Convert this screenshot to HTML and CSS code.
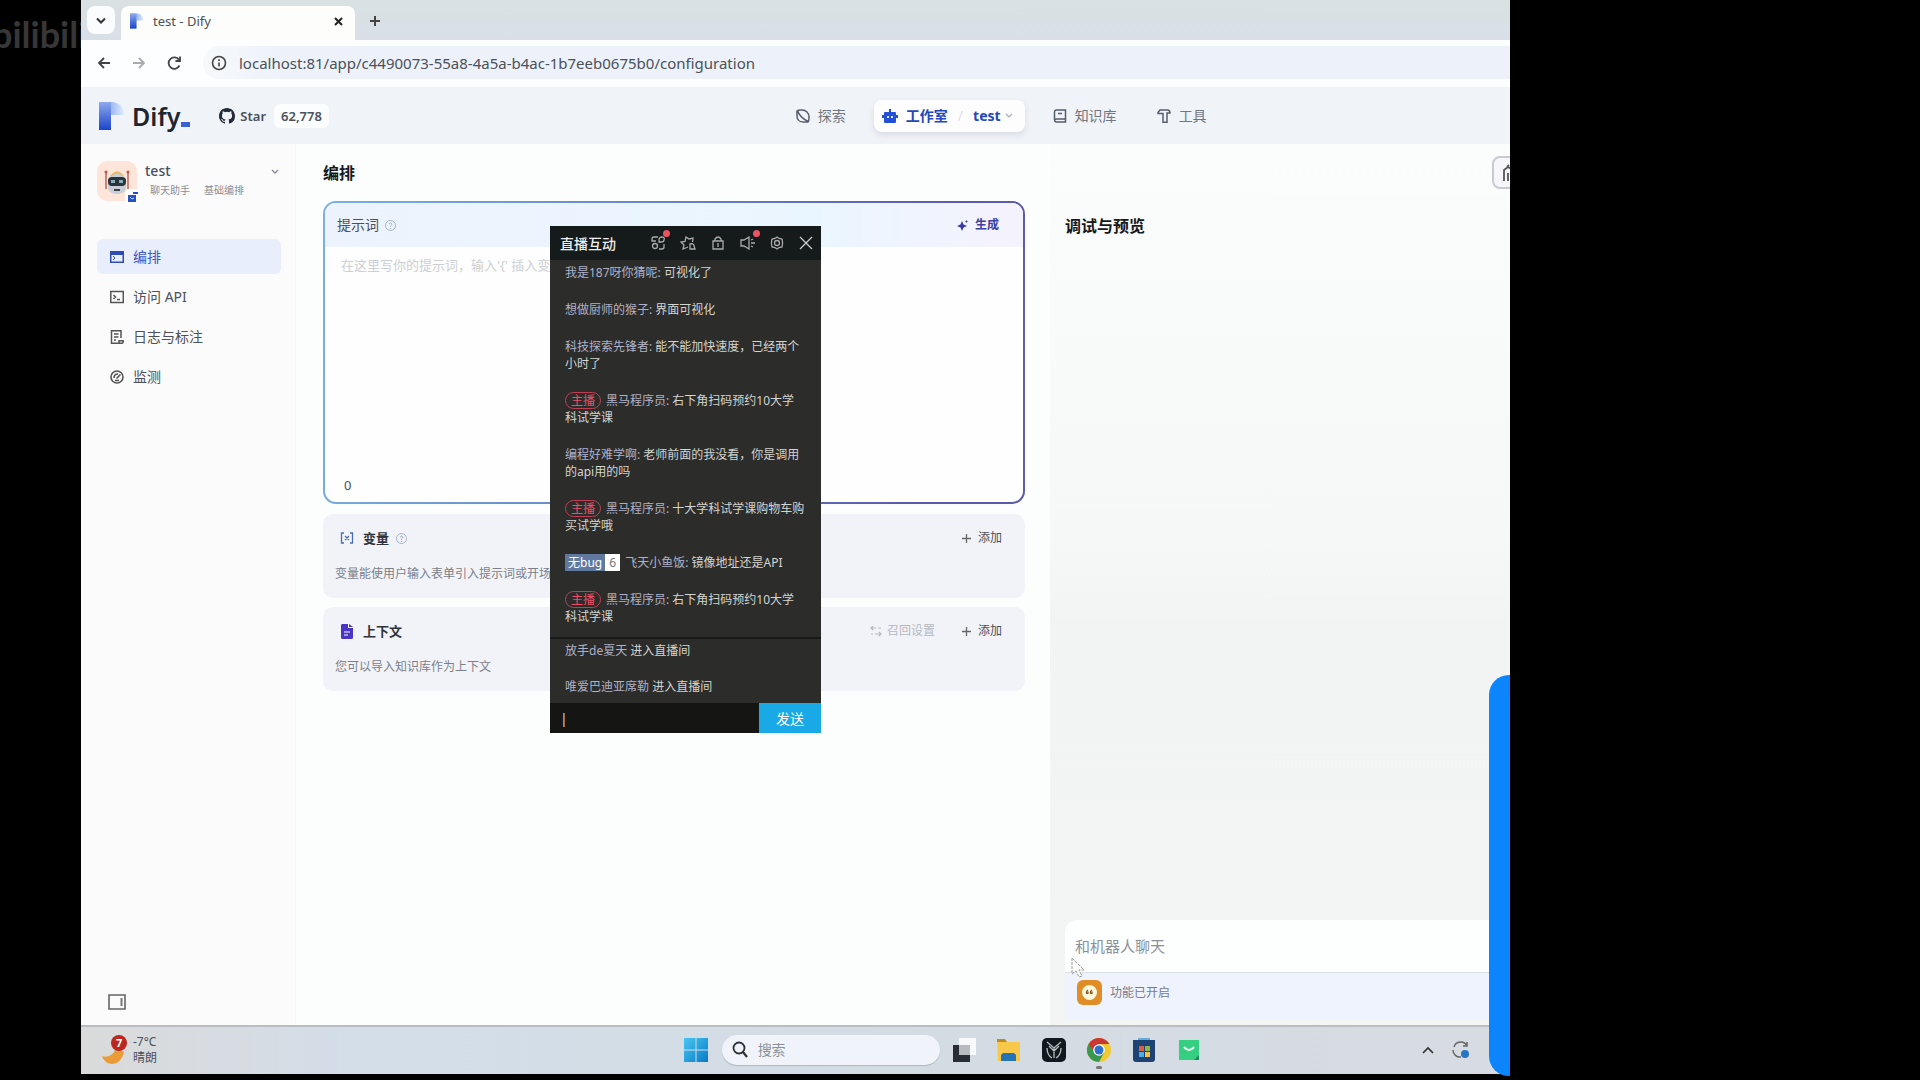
FILE: index.html
```html
<!DOCTYPE html>
<html lang="zh-CN">
<head>
<meta charset="utf-8">
<title>test - Dify</title>
<link rel="stylesheet" href="styles.css">
</head>
<body>
<div class="stage">
<span class="watermark">bilibili</span>
<div class="screen">

  <div class="tabstrip">
    <button class="tab-list" aria-label="搜索标签页"><svg width="10" height="7" viewBox="0 0 10 7"><path d="M1 1.500 5 5.500 9 1.500" fill="none" stroke="#333" stroke-width="2"/></svg></button>
    <div class="tab">
      <svg width="14" height="16" viewBox="0 0 26 28"><use href="#dify-mark"/></svg>
      <span class="tab-title">test - Dify</span>
      <button class="plain" aria-label="关闭标签页"><svg width="9" height="9" viewBox="0 0 9 9"><path d="M1 1 8 8M8 1 1 8" stroke="#222" stroke-width="2"/></svg></button>
    </div>
    <button class="plain new-tab" aria-label="新标签页"><svg width="12" height="12" viewBox="0 0 12 12"><path d="M6 1v10M1 6h10" stroke="#444" stroke-width="2"/></svg></button>
  </div>

  <div class="toolbar">
    <button class="plain" aria-label="后退"><svg width="14" height="12" viewBox="0 0 14 12"><path d="M13 6H2M7 1 2 6l5 5" fill="none" stroke="#444" stroke-width="1.800"/></svg></button>
    <button class="plain" aria-label="前进"><svg width="14" height="12" viewBox="0 0 14 12"><path d="M1 6h11M7 1l5 5-5 5" fill="none" stroke="#aaa" stroke-width="1.800"/></svg></button>
    <button class="plain" aria-label="重新加载"><svg width="15" height="14" viewBox="0 0 15 14"><path d="M12.500 9.500A5.700 5.700 0 1 1 12 3.800M13 .5v4.500H8.500" fill="none" stroke="#444" stroke-width="1.800"/></svg></button>
    <div class="address">
      <svg width="16" height="16" viewBox="0 0 16 16"><circle cx="8" cy="8" r="6.500" fill="none" stroke="#444" stroke-width="1.600"/><path d="M8 7.500v4M8 4.300v1.700" stroke="#444" stroke-width="1.600"/></svg>
      <input class="url" aria-label="网址" value="localhost:81/app/c4490073-55a8-4a5a-b4ac-1b7eeb0675b0/configuration">
    </div>
  </div>

  <header class="app-header">
    <a class="brand" href="#">
      <svg width="26" height="28" viewBox="0 0 26 28">
        <defs>
          <linearGradient id="g1" x1="0" y1="0" x2="0" y2="1"><stop offset="0" stop-color="#8fa8ee"/><stop offset="1" stop-color="#1a45c8"/></linearGradient>
          <linearGradient id="g2" x1="0" y1="0" x2="1" y2="0"><stop offset="0.300" stop-color="#86a8ee"/><stop offset="1" stop-color="#e0ecfb"/></linearGradient>
          <g id="dify-mark"><path d="M0 0h12C20 0 25 5 25 13H12V28H0z" fill="url(#g2)"/><path d="M0 0h12v28H0z" fill="url(#g1)"/></g>
        </defs>
        <use href="#dify-mark"/>
      </svg>
      <span class="brand-name">Dify</span><i class="brand-dash"></i>
    </a>
    <a class="github" href="#">
      <svg width="16" height="16" viewBox="0 0 16 16"><path fill="#222b38" d="M8 0C3.580 0 0 3.580 0 8c0 3.540 2.290 6.530 5.470 7.590.4.070.55-.17.55-.38 0-.19-.01-.82-.01-1.490-2.010.37-2.530-.49-2.690-.94-.09-.23-.48-.94-.82-1.130-.28-.15-.68-.52-.01-.53.63-.01 1.080.58 1.230.82.72 1.210 1.870.87 2.330.66.07-.52.28-.87.51-1.070-1.780-.2-3.640-.89-3.640-3.950 0-.87.31-1.590.82-2.150-.08-.2-.36-1.020.08-2.120 0 0 .67-.21 2.200.82a7.600 7.600 0 0 1 4 0c1.530-1.040 2.200-.82 2.200-.82.44 1.100.16 1.920.08 2.120.51.56.82 1.270.82 2.150 0 3.070-1.870 3.750-3.650 3.950.29.25.54.73.54 1.480 0 1.070-.01 1.930-.01 2.200 0 .21.15.46.55.38A8 8 0 0 0 16 8c0-4.420-3.580-8-8-8z"/></svg>
      <span>Star</span><span class="stars">62,778</span>
    </a>
    <nav class="topnav">
      <a class="explore" href="#"><svg width="14" height="14" viewBox="0 0 14 14" fill="none" stroke="#555d6b" stroke-width="1.500"><path d="M1 2C2 .8 4 1 6 1c4 0 7 3 7 7 0 2 .2 4-1 5-2 .3-4 0-5 0-4 0-6-3-6-6 0-2-.2-4 0-5zM1.500 1.500q2 7 11 11"/></svg>探索</a>
      <div class="studio">
        <a href="#"><svg width="16" height="14" viewBox="0 0 16 14"><path d="M7 0h2v3h4a1 1 0 0 1 1 1v2h2v3h-2v4a1 1 0 0 1-1 1H3a1 1 0 0 1-1-1V9H0V6h2V4a1 1 0 0 1 1-1h4z" fill="#2450d8"/><path d="M5 7h2v2H5zM9 7h2v2H9z" fill="#dbe6ff"/></svg>工作室</a>
        <i class="slash">/</i>
        <button class="plain app-pick">test <svg width="8" height="6" viewBox="0 0 8 6"><path d="M1 1l3 3 3-3" fill="none" stroke="#aab" stroke-width="1.200"/></svg></button>
      </div>
      <a class="knowledge" href="#"><svg width="14" height="14" viewBox="0 0 14 14" fill="none" stroke="#555d6b" stroke-width="1.500"><path d="M12.500 1H3a2 2 0 0 0-1.500 2v8A2 2 0 0 0 3 13h9.500zM1.500 11.500Q2 10 3.500 10h9M5 4.500h4"/></svg>知识库</a>
      <a href="#"><svg width="14" height="14" viewBox="0 0 14 14" fill="none" stroke="#555d6b" stroke-width="1.500"><path d="M1 3.500 3 1h8q2 .3 2 3h-3v9.200H6V4.500H1z"/></svg>工具</a>
    </nav>
  </header>

  <div class="workspace">
    <aside class="sidebar">
      <div class="app-info">
        <div class="avatar">
          <svg width="40" height="40" viewBox="0 0 40 40"><path d="M9 11v17M31 11v17" stroke="#b5655d" stroke-width="1.500"/><circle cx="9" cy="11" r="1.500" fill="#cb4f45"/><circle cx="31" cy="11" r="1.500" fill="#cb4f45"/><path d="M13 15q7-9 14 0z" fill="#efb758"/><path d="M11 18q9-11 18 0v8q0 7-9 7t-9-7z" fill="#c8ced5"/><rect x="11" y="16" width="18" height="9" rx="4" fill="#29343d"/><path d="M14 19h4v3h-4zM22 19h4v3h-4z" fill="#8aaeb6"/><path d="M17 28h6v2h-6z" fill="#3c4146"/></svg>
          <span class="app-badge"><svg width="10" height="10" viewBox="0 0 10 10"><path d="M0 3h8v7H0zM5 0h5v2H5z" fill="#2450c8"/><path d="m2 5 2 2 2-1" stroke="#cfe0ff" fill="none"/></svg></span>
        </div>
        <div class="app-text"><b>test</b><p><span>聊天助手</span><span>基础编排</span></p></div>
        <button class="plain" aria-label="展开"><svg width="8" height="6" viewBox="0 0 8 6"><path d="M1 1l3 3 3-3" fill="none" stroke="#889" stroke-width="1.300"/></svg></button>
      </div>
      <nav class="sidenav">
        <a class="active" href="#"><svg width="14" height="14" viewBox="0 0 14 14"><path d="M0 1h14v12H0z" fill="#304bb5"/><path d="M1.500 5h11v6.500h-11z" fill="#e8edff"/><path d="m3 6 2 2-2 2" fill="none" stroke="#304bb5"/></svg>编排</a>
        <a href="#"><svg width="14" height="14" viewBox="0 0 14 14" fill="none" stroke="#555" stroke-width="1.500"><path d="M.8 1.500h12.500v11H.8zM3.500 5l2 2-2 2M7 9.500h3"/></svg>访问 API</a>
        <a href="#"><svg width="14" height="14" viewBox="0 0 14 14" fill="none" stroke="#555" stroke-width="1.500"><path d="M11 8V.8H1.500v12.500H12q1.500-.5 1.200-2.500H9v2.500M4 4h4.500M4 7h4.500M4 10h2"/></svg>日志与标注</a>
        <a href="#"><svg width="14" height="14" viewBox="0 0 14 14" fill="none" stroke="#555" stroke-width="1.600"><circle cx="7" cy="7" r="6"/><path d="m6.500 8.500 4-4M4 8q0-4 4-4M5 10.500h4"/></svg>监测</a>
      </nav>
      <button class="plain collapse" aria-label="收起侧栏"><svg width="18" height="16" viewBox="0 0 18 16"><path d="M1 1h16v14H1z" fill="none" stroke="#666" stroke-width="1.600"/><path d="M13.500 4v8" stroke="#777" stroke-width="2"/></svg></button>
    </aside>

    <main class="main">
      <h1>编排</h1>
      <section class="prompt">
        <div class="prompt-head"><label for="prompt">提示词</label><svg width="11" height="11" viewBox="0 0 11 11"><use href="#help"/></svg>
          <button class="plain generate"><svg width="11" height="11" viewBox="0 0 11 11"><path d="M5 1 6.500 4.500 10 6 6.500 7.500 5 11 3.500 7.500 0 6l3.500-1.500zM9.500 0 10 1l1 .5-1 .5-.5 1-.5-1-1-.5 1-.5z" fill="#3538a5"/></svg>生成</button></div>
        <textarea id="prompt" placeholder="在这里写你的提示词，输入'{' 插入变量、输入'/' 插入提示内容块"></textarea>
        <span class="count">0</span>
      </section>
      <section class="card">
        <div class="card-head"><svg width="14" height="12" viewBox="0 0 14 12" fill="none" stroke="#4b6fae" stroke-width="1.300"><path d="M4 1H1.500v10H4M10 1h2.500v10H10M5 4l4 4M9 4 5 8"/></svg><h2>变量</h2><svg width="11" height="11" viewBox="0 0 11 11"><g id="help"><circle cx="5.500" cy="5.500" r="5" fill="none" stroke="#a8b5c4"/><path d="M4 4q1.500-2 3 0Q7 5 5.500 6v1M5.500 8v1" fill="none" stroke="#a8b5c4"/></g></svg>
          <button class="plain add"><svg width="9" height="9" viewBox="0 0 9 9"><path d="M4.500 0v9M0 4.500h9" stroke="#666" stroke-width="1.300"/></svg>添加</button></div>
        <p>变量能使用户输入表单引入提示词或开场白，你可以试试在提示词中输入</p>
      </section>
      <section class="card">
        <div class="card-head"><svg width="14" height="15" viewBox="0 0 14 15"><path d="M2 0h6v4h5v9.500q0 1.500-1.500 1.500h-9Q1 15 1 13.500V1.500Q1 0 2 0zM9 0l4 3H9z" fill="#4a34c4"/><path d="M4 8h6M4 11h4" stroke="#fff" stroke-width="1.200"/></svg><h2>上下文</h2>
          <button class="plain recall" disabled><svg width="12" height="11" viewBox="0 0 12 11" fill="none" stroke="#b5b9bf" stroke-width="1.200"><path d="M3 0 1 2l2 2M1 2h5M9 6l2 2-2 2M11 8H5M8 2h3M1 8h2"/></svg>召回设置</button>
          <button class="plain add"><svg width="9" height="9" viewBox="0 0 9 9"><path d="M4.500 0v9M0 4.500h9" stroke="#666" stroke-width="1.300"/></svg>添加</button></div>
        <p>您可以导入知识库作为上下文</p>
      </section>
    </main>

    <section class="preview">
      <button class="agent" aria-label="设置"><svg width="14" height="18" viewBox="0 0 14 18"><path d="M2 17V6l4-3 5 3v11M5 3 7 1M6 17V9" fill="none" stroke="#555" stroke-width="1.800"/></svg></button>
      <h1>调试与预览</h1>
      <div class="chat">
        <input class="chat-input" aria-label="聊天" placeholder="和机器人聊天">
        <div class="features"><svg width="25" height="25" viewBox="0 0 25 25"><rect width="25" height="25" rx="6" fill="#e08c27"/><circle cx="12.500" cy="12.500" r="7.500" fill="#fff7dc"/><path d="M11 10q-2 1-1.500 3.500H11v-1.500h-.8M15 10q-2 1-1.500 3.500H15v-1.500h-.8" fill="none" stroke="#8a5a25" stroke-width="1.200"/></svg>功能已开启</div>
      </div>
    </section>
  </div>

  <footer class="taskbar">
    <div class="weather">
      <svg width="28" height="30" viewBox="0 0 28 30"><path d="M1 21q10 3 14-8l8 4q-3 12-12 12Q3 28 1 21z" fill="#eb9b37"/><circle cx="18" cy="8" r="8" fill="#bd261f"/><text x="15" y="12" class="alert-num">7</text></svg>
      <p>-7°C<br>晴朗</p>
    </div>
    <div class="dock">
      <svg width="24" height="24" viewBox="0 0 24 24"><defs><linearGradient id="win" x2="1" y2="1"><stop stop-color="#47c7f2"/><stop offset="1" stop-color="#087ac6"/></linearGradient></defs><path d="M0 0h11.500v11.500H0zM12.500 0H24v11.500H12.500zM0 12.500h11.500V24H0zM12.500 12.500H24V24H12.500z" fill="url(#win)"/></svg>
      <label class="search"><svg width="16" height="17" viewBox="0 0 16 17"><circle cx="7" cy="7" r="5.500" fill="none" stroke="#2b3036" stroke-width="1.800"/><path d="m11 11 4 5" stroke="#2b3036" stroke-width="2.200"/></svg><input aria-label="搜索" placeholder="搜索"></label>
      <svg width="24" height="24" viewBox="0 0 24 24"><path d="M7 0h17v17H7z" fill="#f8f9fa"/><path d="M1 7h17v17H1z" fill="#272c35"/><path d="M7 7h11v10H7z" fill="#b8bcc1"/></svg>
      <svg width="24" height="24" viewBox="0 0 24 24"><path d="M0 1h8l2 3h13v19H1z" fill="#f8c84a"/><path d="M0 1h8l2 3H0z" fill="#bd8d22"/><path d="M4 23v-6l2-2h11l2 2v6z" fill="#2473b6"/></svg>
      <svg width="24" height="24" viewBox="0 0 24 24"><rect width="24" height="24" rx="5" fill="#11191f"/><path d="m5 4 7 6 7-6M7 8l5 5 5-5M12 10v10M5 10q0 7 5 10M19 10q0 7-5 10" fill="none" stroke="#b4bfc1" stroke-width="1.300"/></svg>
      <span class="running"><svg width="24" height="24" viewBox="0 0 24 24"><circle cx="12" cy="12" r="12" fill="#f3c932"/><path d="M1.600 6A12 12 0 0 0 12 24l5-9-5-3z" fill="#39984d"/><path d="M1.600 6A12 12 0 0 1 22.400 6H12l-5 8z" fill="#cb3732"/><circle cx="12" cy="12" r="5.800" fill="#fff"/><circle cx="12" cy="12" r="4.500" fill="#2d71cf"/></svg></span>
      <svg width="24" height="24" viewBox="0 0 24 24"><path d="M7 3V1h10v2" fill="none" stroke="#65acd9" stroke-width="2"/><path d="M1 2h22v19q0 3-3 3H4q-3 0-3-3z" fill="#1e4273"/><path d="M7 8h5v5H7z" fill="#d86143"/><path d="M13 8h5v5h-5z" fill="#91b64b"/><path d="M7 14h5v5H7z" fill="#4aaee1"/><path d="M13 14h5v5h-5z" fill="#f0c14b"/></svg>
      <svg width="24" height="24" viewBox="0 0 24 24"><path d="M2 2h20v20H2z" fill="#35cf81"/><path d="M22 17v5h-5z" fill="#198d58"/><path d="M7 9q5 6 10 0" fill="none" stroke="#e9fff3" stroke-width="2"/></svg>
    </div>
    <div class="tray">
      <svg width="12" height="8" viewBox="0 0 12 8"><path d="m1 7 5-5 5 5" fill="none" stroke="#333" stroke-width="1.700"/></svg>
      <svg width="18" height="18" viewBox="0 0 18 18"><path d="M2 6a7 7 0 0 1 13-1M15 1v4h-4M1 9a7 7 0 0 0 8 7" fill="none" stroke="#666" stroke-width="1.500"/><circle cx="13" cy="13" r="4" fill="#2575c2"/></svg>
      <svg width="14" height="14" viewBox="0 0 14 14"><circle cx="7" cy="7" r="6" fill="#667078"/></svg>
    </div>
  </footer>

  <section class="live">
    <header class="live-head">
      <h2>直播互动</h2>
      <span class="live-icon dot"><svg width="14" height="14" viewBox="0 0 14 14"><path d="M5 5H1V3q0-2 2-2h4M8 4q0-3 3-3t2 3q0 2-3 2H8zM13 8v3q0 2-2 2H8"/><circle cx="4" cy="10" r="2.500"/></svg></span>
      <span class="live-icon"><svg width="16" height="14" viewBox="0 0 16 14"><path d="M8 11 3 13l1-4-3-3 4-.5L6 1l3 2 4-1-.5 4M10 8q4-1 4 2l1 3h-5z"/></svg></span>
      <span class="live-icon"><svg width="14" height="14" viewBox="0 0 14 14"><path d="M2 5h10v8H2zM4 5V3q3-4 6 0v2M7 7v4"/></svg></span>
      <span class="live-icon dot"><svg width="15" height="14" viewBox="0 0 15 14"><path d="M1 4h3l5-3v12L4 10H1zM11 4l2-1M11 7h4M11 10l2 1"/></svg></span>
      <span class="live-icon"><svg width="14" height="14" viewBox="0 0 14 14"><path d="m7 1 2 1.500 3 .5.500 3v2L12 11l-3 .5L7 13l-2-1.500L2 11l-.5-3V6L2 3l3-.5z"/><circle cx="7" cy="7" r="2.500"/></svg></span>
      <button class="plain" aria-label="关闭"><svg width="14" height="14" viewBox="0 0 14 14"><path d="M1 1 13 13M13 1 1 13" stroke="#ccc" stroke-width="1.300"/></svg></button>
    </header>
    <div class="messages">
      <p><em>我是187呀你猜呢:</em> 可视化了</p>
      <p><em>想做厨师的猴子:</em> 界面可视化</p>
      <p><em>科技探索先锋者:</em> 能不能加快速度，已经两个小时了</p>
      <p><span class="host">主播</span><em>黑马程序员:</em> 右下角扫码预约10大学科试学课</p>
      <p><em>编程好难学啊:</em> 老师前面的我没看，你是调用的api用的吗</p>
      <p><span class="host">主播</span><em>黑马程序员:</em> 十大学科试学课购物车购买试学哦</p>
      <p><span class="medal">无bug<b>6</b></span><em>飞天小鱼饭:</em> 镜像地址还是API</p>
      <p><span class="host">主播</span><em>黑马程序员:</em> 右下角扫码预约10大学科试学课</p>
    </div>
    <div class="arrivals"><p><em>放手de夏天</em> 进入直播间</p><p><em>唯爱巴迪亚席勒</em> 进入直播间</p></div>
    <form class="send"><input aria-label="发送弹幕" value="|"><button type="button">发送</button></form>
  </section>

  <svg class="cursor" width="16" height="24" viewBox="0 0 16 24"><path d="M2 2v16l4-3 3 6 3-1-3-6h5z" fill="#fff" stroke="#999" stroke-dasharray="3 1"/></svg>
  <div class="blue-panel"></div>
</div>
</div>
</body>
</html>
```
FILE: styles.css
```css
* { box-sizing: border-box; }
body {
  margin: 0;
  background: #000;
  color: #4b5059;
  font: 14px/20px "Noto Sans", "Noto Sans CJK SC", sans-serif;
}
h1, h2, p { margin: 0; }
h1 { font-size: 16px; line-height: 24px; color: #16181c; }
a { color: inherit; text-decoration: none; }
i, em { font-style: normal; }
svg { display: block; flex: none; }
input, textarea, button { font: inherit; color: inherit; }
input, textarea { border: 0; outline: 0; background: transparent; padding: 0; min-width: 0; }
.plain { border: 0; background: none; padding: 0; display: flex; align-items: center; }

.stage {
  position: relative;
  min-height: 100vh;
  display: grid;
  grid-template-columns: 81px minmax(0, 1fr) 410px;
  padding-bottom: 6px;
  overflow: hidden;
}
.screen {
  grid-column: 2;
  position: relative;
  display: flex;
  flex-direction: column;
  background: #fcfdfd;
}
.watermark {
  position: absolute;
  left: -8px;
  top: 8px;
  z-index: 0;
  font: 700 36px/52px Lato, sans-serif;
  color: #373737;
}

/* browser chrome */
.tabstrip { display: flex; height: 40px; padding: 6px 8px 0 6px; background: linear-gradient(#dae1e2, #d8dfe8); }
.tab-list {
  width: 28px; height: 28px; border: 0; border-radius: 8px; background: #fbfcfd; padding: 0;
  display: flex; align-items: center; justify-content: center;
}
.tab {
  width: 234px; margin-left: 6px; padding: 0 12px 4px 9px; border-radius: 8px 8px 0 0; background: #fdfefc;
  display: flex; align-items: center; gap: 9px;
}
.tab-title { flex: 1; font-size: 13px; }
.new-tab { margin: 0 0 4px 14px; }
.toolbar { display: flex; align-items: center; gap: 21px; height: 47px; padding: 0 0 2px 16px; background: #fcfeff; }
.address {
  flex: 1; display: flex; align-items: center; gap: 12px; height: 33px; padding-left: 8px;
  border-radius: 16px 0 0 16px; background: linear-gradient(90deg, #f7f9fa, #edf2fa 80px);
}
.url { flex: 1; font-size: 15px; }

/* application header */
.app-header {
  display: grid; grid-template-columns: auto auto 1fr; align-items: center; height: 57px;
  padding-left: 18px; background: #f0f3f8;
}
.brand { display: flex; align-items: center; gap: 7px; color: #1f2530; }
.brand-name { font: 600 25px/32px "Noto Sans", sans-serif; }
.brand-dash { width: 9px; height: 5px; margin: 18px 0 0 -6px; background: #3b5fd4; }
.github { display: flex; align-items: center; gap: 5px; margin-left: 29px; font-size: 13px; font-weight: 600; }
.stars { margin-left: 3px; padding: 2px 7px; border-radius: 6px; background: #fcfdfe; }
.topnav { display: flex; align-items: center; margin-left: 467px; color: #70767f; }
.topnav a { display: flex; align-items: center; gap: 8px; }
.studio {
  display: flex; align-items: center; height: 32px; margin: 0 28px 0 28px; padding: 0 12px 0 8px; border-radius: 8px;
  background: #fdfdfd; box-shadow: 0 3px 6px #d9dbe2; color: #2348bd; font-weight: 700;
}
.slash { margin: 0 10px; color: #dde; font-weight: 400; }
.app-pick { gap: 4px; font-weight: 700; }
.knowledge { margin-right: 40px; }

/* workspace */
.workspace { flex: 1; display: grid; grid-template-columns: 215px minmax(0, 1fr) 460px; }
.sidebar { display: flex; flex-direction: column; padding: 17px 14px 15px 16px; background: #fbfbfc; border-right: 1px solid #f6f7f9; }
.app-info { display: flex; gap: 8px; align-items: flex-start; }
.app-info > button { margin: 8px 2px 0 0; }
.avatar { position: relative; border-radius: 10px; background: #fde5da; }
.app-badge { position: absolute; right: -4px; bottom: -4px; padding: 3px; border-radius: 5px; background: #fff; }
.app-text { flex: 1; }
.app-text b { font-weight: 500; }
.app-text p { display: flex; gap: 14px; padding-left: 5px; font-size: 10px; line-height: 18px; color: #8b8f96; }
.sidenav { display: flex; flex-direction: column; gap: 5px; margin-top: 38px; }
.sidenav a { display: flex; align-items: center; gap: 9px; height: 35px; padding-left: 13px; border-radius: 6px; }
.sidenav .active { background: #e9eefd; color: #3e57c4; }
.collapse { margin: auto 0 0 11px; }

.main { padding: 17px 25px 0 27px; }
.prompt {
  display: flex; flex-direction: column; height: 303px; margin: 16px 0 10px; border: 2px solid transparent; border-radius: 13px;
  background: linear-gradient(#fdfefd, #fdfefd) padding-box, linear-gradient(100deg, #79b1e5, #5b5ba8 85%) border-box;
}
.prompt-head {
  display: flex; align-items: center; gap: 6px; height: 44px; padding: 0 24px 0 12px;
  border-radius: 11px 11px 0 0; background: linear-gradient(90deg, #edf3fd, #eaf6ff 70%, #f5f2fd);
}
.generate { gap: 7px; margin-left: auto; font-size: 12px; font-weight: 700; color: #3c3fa4; }
.prompt textarea { flex: 1; resize: none; padding: 8px 16px; font-size: 13px; }
::placeholder { color: #8c9198; opacity: 1; }
.prompt textarea::placeholder { color: #cdd0d3; }
.count { padding: 0 0 7px 19px; font-size: 13px; }
.card { height: 84px; margin-bottom: 9px; padding: 12px 23px 0 12px; border-radius: 10px; background: #f2f3f8; }
.card-head { display: flex; align-items: center; height: 24px; padding-left: 5px; }
.card h2 { margin: 0 7px 0 9px; font-size: 13px; line-height: 20px; color: #2e333b; }
.card p { margin-top: 14px; font-size: 12px; line-height: 20px; color: #7b8088; white-space: nowrap; }
.add { gap: 7px; margin-left: auto; font-size: 12px; }
.recall { gap: 5px; margin-left: auto; font-size: 12px; color: #b5b9bf; }
.recall + .add { margin-left: 27px; }

.preview {
  position: relative; display: flex; flex-direction: column; padding: 70px 0 6px 15px; overflow: hidden;
  background: linear-gradient(#fbfdfc, #f6f8f7 45%, #f2f4f4 55%, #f3f4f4);
}
.agent {
  position: absolute; right: -15px; top: 12px; width: 33px; height: 33px; padding: 6px 8px;
  border: 2px solid #c9c9d2; border-radius: 8px; background: #f7f7fb;
}
.chat { margin-top: auto; }
.chat-input { display: block; width: 100%; height: 52px; padding: 0 10px; border-radius: 12px 0 0 0; background: #fdfefe; font-size: 15px; }
.features { display: flex; align-items: center; gap: 8px; height: 47px; padding: 0 0 7px 12px; border-top: 1px solid #dddfe5; background: #eff3fe; font-size: 12px; color: #777c88; }

/* Windows taskbar */
.taskbar {
  display: grid; grid-template-columns: 58fr auto 30fr; align-items: center; height: 49px; padding: 0 8px 2px 20px;
  border-top: 2px solid #babec2; background: linear-gradient(90deg, #dadada, #d3dee9 20%, #d3dce3 60%, #d8dbe2);
}
.weather { display: flex; align-items: center; gap: 4px; }
.weather p { font-size: 12px; line-height: 16px; }
.alert-num { fill: #fff; font-size: 11px; font-weight: 700; }
.dock { display: flex; align-items: center; gap: 21px; }
.search { display: flex; align-items: center; gap: 10px; width: 218px; height: 30px; margin: 0 -9px 0 -7px; padding: 0 10px; border-radius: 16px; background: #f0f4fa; box-shadow: 0 1px 1px #aeb6bf; }
.search input { width: 100%; }
.running { position: relative; }
.running::after { content: ""; position: absolute; left: 9px; top: 28px; width: 6px; height: 3px; border-radius: 2px; background: #777; }
.tray { display: flex; align-items: center; justify-content: flex-end; gap: 18px; }

/* live chat window */
.live { position: absolute; left: 469px; top: 226px; width: 271px; background: #2c2d2b; color: #d4d4d0; font-size: 12px; line-height: 17px; }
.live-head { display: flex; align-items: center; gap: 15px; height: 34px; padding: 0 8px 0 10px; background: #151a1a; }
.live-head h2 { flex: 1; font-size: 14px; font-weight: 500; color: #eee; white-space: nowrap; }
.live-icon { position: relative; fill: none; stroke: #aaa; stroke-width: 1.3px; }
.dot::after { content: ""; position: absolute; right: -5px; top: -6px; width: 7px; height: 7px; border-radius: 50%; background: #ee5361; }
.messages { display: flex; flex-direction: column; gap: 20px; padding: 4px 15px 12px 15px; }
.live em { color: #b0b1c8; }
.host { display: inline-block; vertical-align: top; height: 17px; margin-right: 5px; padding: 0 5px; border: 1px solid #bd4055; border-radius: 9px; line-height: 15px; color: #f04d66; }
.medal { display: inline-flex; vertical-align: top; height: 17px; margin-right: 5px; padding-left: 3px; background: #61799f; color: #fff; }
.medal b { width: 15px; margin-left: 3px; background: #fff; color: #777; font-weight: 400; text-align: center; }
.arrivals { display: flex; flex-direction: column; gap: 19px; padding: 3px 15px 8px; border-top: 2px solid #191a1a; }
.send { display: flex; height: 30px; background: #151614; }
.send input { flex: 1; padding-left: 10px; font-size: 14px; }
.send button { width: 62px; padding: 0; border: 0; background: #18a9e6; color: #fff; font-size: 14px; }

.cursor { position: absolute; right: 424px; bottom: 94px; }
.blue-panel { position: absolute; right: 0; bottom: -2px; width: 21px; height: 401px; border-radius: 20px 0 0 20px; background: #0b84fc; }
```
